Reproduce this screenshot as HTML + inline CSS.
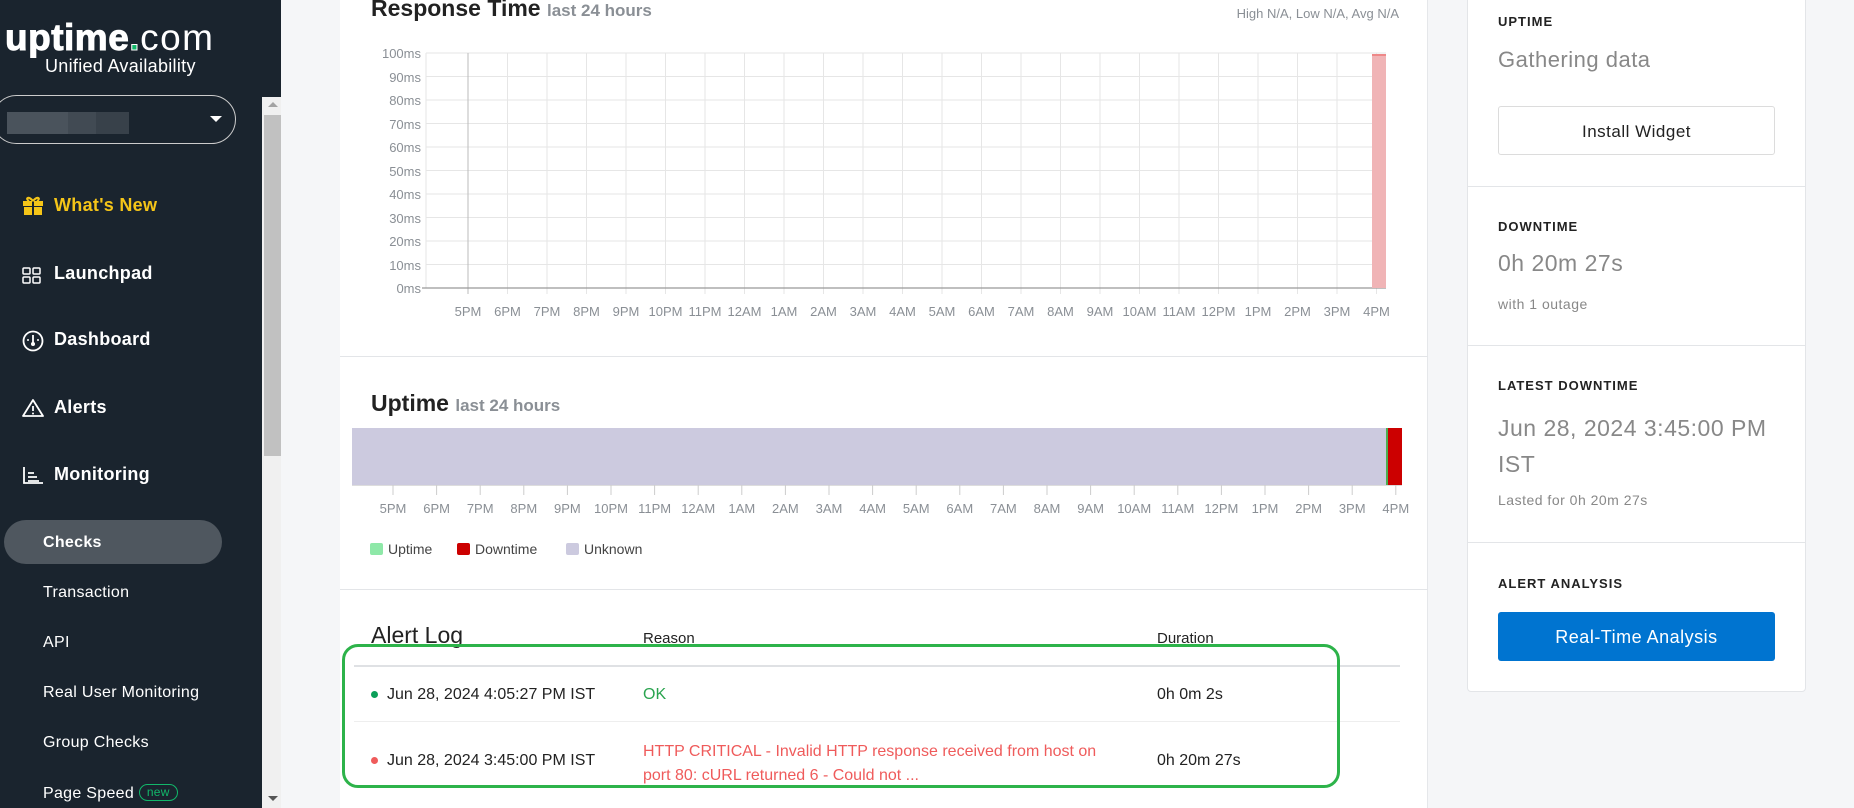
<!DOCTYPE html>
<html><head><meta charset="utf-8"><style>
*{margin:0;padding:0;box-sizing:border-box}
body{width:1854px;height:808px;overflow:hidden;background:#f5f6f8;font-family:"Liberation Sans",sans-serif;position:relative}
.a{position:absolute;white-space:nowrap}
#sb{position:absolute;left:0;top:0;width:281px;height:808px;background:#1a242e}
.nav{position:absolute;left:54px;color:#fff;font-size:18px;font-weight:bold;letter-spacing:.3px}
.sub{position:absolute;left:43px;color:#fff;font-size:16px;letter-spacing:.3px}
.ic{position:absolute;left:22px}
.n{font-family:"Liberation Sans Narrow","Liberation Sans",sans-serif}
.rc{color:#222;font-size:13px;font-weight:bold;letter-spacing:1px;left:1498px}
.rv{color:#888;font-size:23px;left:1498px;letter-spacing:.5px}
.rs{color:#888;font-size:14px;left:1498px;letter-spacing:.5px}
</style></head><body>
<div id="sb">
 <div class="a" style="left:5px;top:18px;color:#fff;font-size:37px;line-height:40px;font-weight:900;letter-spacing:0.5px;-webkit-text-stroke:1px #fff">uptime<span style="color:#12b76a">.</span><span style="font-weight:normal;-webkit-text-stroke:0;letter-spacing:1.5px">com</span></div>
 <div class="a" style="left:45px;top:56px;color:#fff;font-size:18px;letter-spacing:.3px">Unified Availability</div>
 <div class="a" style="left:-8px;top:95px;width:244px;height:49px;border:1px solid #ccc;border-radius:25px"></div>
 <div class="a" style="left:7px;top:112px;width:61px;height:22px;background:#4a535c"></div>
 <div class="a" style="left:68px;top:112px;width:28px;height:22px;background:#414a53"></div>
 <div class="a" style="left:96px;top:112px;width:33px;height:22px;background:#38414a"></div>
 <div class="a" style="left:210px;top:116px;width:0;height:0;border-left:6px solid transparent;border-right:6px solid transparent;border-top:6px solid #fff"></div>
 <div class="a" style="left:262px;top:97px;width:19px;height:711px;background:#f0f0f0"></div>
 <div class="a" style="left:264px;top:115px;width:17px;height:341px;background:#c1c1c1"></div>
 <div class="a" style="left:268px;top:102px;border-left:5px solid transparent;border-right:5px solid transparent;border-bottom:5px solid #a3a3a3"></div>
 <div class="a" style="left:268px;top:796px;border-left:5px solid transparent;border-right:5px solid transparent;border-top:5px solid #555"></div>
 <svg class="ic" style="top:195px" width="22" height="20" viewBox="0 0 22 20"><rect x="1" y="6" width="20" height="5" fill="#f5c518"/><rect x="2" y="12" width="18" height="8" fill="#f5c518"/><rect x="10" y="6" width="2" height="14" fill="#1a242e"/><path d="M11 6 C6 0 3 4 7 6 M11 6 C16 0 19 4 15 6" stroke="#f5c518" stroke-width="2" fill="none"/></svg>
 <div class="nav" style="top:195px;color:#f5c518">What's New</div>
 <svg class="ic" style="top:266px" width="20" height="20"><g fill="none" stroke="#fff" stroke-width="1.5"><rect x="1" y="2" width="7" height="6" rx="1"/><rect x="11" y="2" width="7" height="6" rx="1"/><rect x="1" y="11" width="7" height="6" rx="1"/><rect x="11" y="11" width="7" height="6" rx="1"/></g></svg>
 <div class="nav" style="top:263px">Launchpad</div>
 <svg class="ic" style="top:330px" width="22" height="22"><circle cx="11" cy="11" r="9.5" fill="none" stroke="#fff" stroke-width="1.8"/><path d="M11 5v8" stroke="#fff" stroke-width="1.8"/><circle cx="11" cy="14" r="2" fill="#fff"/><circle cx="6" cy="10" r="1" fill="#fff"/><circle cx="16" cy="10" r="1" fill="#fff"/></svg>
 <div class="nav" style="top:329px">Dashboard</div>
 <svg class="ic" style="top:398px" width="22" height="20"><path d="M11 2 L21 18 H1 Z" fill="none" stroke="#fff" stroke-width="1.8" stroke-linejoin="round"/><path d="M11 8v5" stroke="#fff" stroke-width="1.8"/><circle cx="11" cy="15.5" r="1" fill="#fff"/></svg>
 <div class="nav" style="top:397px">Alerts</div>
 <svg class="ic" style="top:465px" width="22" height="20"><path d="M2 2v16h19M6 8h6M6 12h9M6 16h11" stroke="#fff" stroke-width="1.8" fill="none"/></svg>
 <div class="nav" style="top:464px">Monitoring</div>
 <div class="a" style="left:4px;top:520px;width:218px;height:44px;border-radius:22px;background:#4f575f"></div>
 <div class="sub" style="top:534px;font-weight:bold">Checks</div>
 <div class="sub" style="top:584px">Transaction</div>
 <div class="sub" style="top:634px">API</div>
 <div class="sub" style="top:684px">Real User Monitoring</div>
 <div class="sub" style="top:734px">Group Checks</div>
 <div class="sub" style="top:784px">Page Speed <span style="display:inline-block;border:1px solid #12b76a;color:#12b76a;border-radius:10px;font-size:12px;padding:0 7px;line-height:15px;vertical-align:2px">new</span></div>
</div>

<div class="a" style="left:340px;top:0;width:1088px;height:808px;background:#fff;border-right:1px solid #e5e7ea"></div>
<div class="a" style="left:340px;top:356px;width:1088px;height:1px;background:#e3e5e8"></div>
<div class="a" style="left:340px;top:589px;width:1088px;height:1px;background:#e3e5e8"></div>

<div class="a n" style="left:371px;top:-5px;font-size:23px;font-weight:bold;color:#222">Response Time <span style="font-size:17px;color:#8a8f95">last 24 hours</span></div>
<div class="a n" style="right:455px;top:6px;font-size:13px;color:#8a8f95">High N/A, Low N/A, Avg N/A</div>

<svg class="a" style="left:0;top:0" width="1854" height="808" font-family="Liberation Sans Narrow, Liberation Sans, sans-serif" font-size="13" fill="#8a8f95">
<g stroke="#e6e6e6" stroke-width="1">
<path d="M426 53H1386M426 76.5H1386M426 100H1386M426 123.5H1386M426 147H1386M426 170.5H1386M426 194H1386M426 217.5H1386M426 241H1386M426 264.5H1386"/>
<path d="M507.5 53V294M547 53V294M586.5 53V294M626 53V294M665.5 53V294M705 53V294M744.5 53V294M784 53V294M823.5 53V294M863 53V294M902.5 53V294M942 53V294M981.5 53V294M1021 53V294M1060.5 53V294M1100 53V294M1139.5 53V294M1179 53V294M1218.5 53V294M1258 53V294M1297.5 53V294M1337 53V294M1376.5 53V294M426 53V288"/>
</g>
<path d="M468 53V294" stroke="#bbb"/>
<path d="M422 288H1386" stroke="#999" stroke-width="1.2"/>
<rect x="1372" y="54" width="14" height="234" fill="#f0b4b6"/>
<rect x="1372" y="54" width="14" height="2" fill="#e88"/>
<g text-anchor="end">
<text x="421" y="58">100ms</text><text x="421" y="82">90ms</text><text x="421" y="105">80ms</text><text x="421" y="129">70ms</text><text x="421" y="152">60ms</text><text x="421" y="176">50ms</text><text x="421" y="199">40ms</text><text x="421" y="223">30ms</text><text x="421" y="246">20ms</text><text x="421" y="270">10ms</text><text x="421" y="293">0ms</text>
</g>
<g text-anchor="middle">
<text x="468" y="316">5PM</text><text x="507.5" y="316">6PM</text><text x="547" y="316">7PM</text><text x="586.5" y="316">8PM</text><text x="626" y="316">9PM</text><text x="665.5" y="316">10PM</text><text x="705" y="316">11PM</text><text x="744.5" y="316">12AM</text><text x="784" y="316">1AM</text><text x="823.5" y="316">2AM</text><text x="863" y="316">3AM</text><text x="902.5" y="316">4AM</text><text x="942" y="316">5AM</text><text x="981.5" y="316">6AM</text><text x="1021" y="316">7AM</text><text x="1060.5" y="316">8AM</text><text x="1100" y="316">9AM</text><text x="1139.5" y="316">10AM</text><text x="1179" y="316">11AM</text><text x="1218.5" y="316">12PM</text><text x="1258" y="316">1PM</text><text x="1297.5" y="316">2PM</text><text x="1337" y="316">3PM</text><text x="1376.5" y="316">4PM</text>
</g>
<rect x="352" y="428" width="1035" height="57" fill="#cccadf"/>
<rect x="1386" y="428" width="2" height="57" fill="#4caf50"/>
<rect x="1388" y="428" width="14" height="57" fill="#cc0000"/>
<path d="M352 485.5H1402" stroke="#ddd"/>
<g stroke="#ccc"><path d="M393 485V495M436.6 485V495M480.2 485V495M523.8 485V495M567.4 485V495M611 485V495M654.6 485V495M698.2 485V495M741.8 485V495M785.4 485V495M829 485V495M872.6 485V495M916.2 485V495M959.8 485V495M1003.4 485V495M1047 485V495M1090.6 485V495M1134.2 485V495M1177.8 485V495M1221.4 485V495M1265 485V495M1308.6 485V495M1352.2 485V495M1395.8 485V495"/></g>
<g text-anchor="middle">
<text x="393" y="513">5PM</text><text x="436.6" y="513">6PM</text><text x="480.2" y="513">7PM</text><text x="523.8" y="513">8PM</text><text x="567.4" y="513">9PM</text><text x="611" y="513">10PM</text><text x="654.6" y="513">11PM</text><text x="698.2" y="513">12AM</text><text x="741.8" y="513">1AM</text><text x="785.4" y="513">2AM</text><text x="829" y="513">3AM</text><text x="872.6" y="513">4AM</text><text x="916.2" y="513">5AM</text><text x="959.8" y="513">6AM</text><text x="1003.4" y="513">7AM</text><text x="1047" y="513">8AM</text><text x="1090.6" y="513">9AM</text><text x="1134.2" y="513">10AM</text><text x="1177.8" y="513">11AM</text><text x="1221.4" y="513">12PM</text><text x="1265" y="513">1PM</text><text x="1308.6" y="513">2PM</text><text x="1352.2" y="513">3PM</text><text x="1395.8" y="513">4PM</text>
</g>
<rect x="370" y="543" width="13" height="12" rx="2" fill="#8ee8a8"/><text x="388" y="554" fill="#444" font-size="14">Uptime</text>
<rect x="457" y="543" width="13" height="12" rx="2" fill="#cc0000"/><text x="475" y="554" fill="#444" font-size="14">Downtime</text>
<rect x="566" y="543" width="13" height="12" rx="2" fill="#cccadf"/><text x="584" y="554" fill="#444" font-size="14">Unknown</text>
</svg>

<div class="a n" style="left:371px;top:390px;font-size:23px;font-weight:bold;color:#222">Uptime <span style="font-size:17px;color:#8a8f95">last 24 hours</span></div>

<div class="a n" style="left:371px;top:622px;font-size:23px;color:#222">Alert Log</div>
<div class="a n" style="left:643px;top:630px;font-size:15px;color:#222">Reason</div>
<div class="a n" style="left:1157px;top:630px;font-size:15px;color:#222">Duration</div>
<div class="a" style="left:354px;top:665px;width:1046px;height:2px;background:#dfe1e4"></div>
<div class="a" style="left:354px;top:721px;width:1046px;height:1px;background:#eee"></div>
<div class="a" style="left:371px;top:691px;width:7px;height:7px;border-radius:50%;background:#0a9f58"></div>
<div class="a n" style="left:387px;top:686px;font-size:16px;color:#222">Jun 28, 2024 4:05:27 PM IST</div>
<div class="a n" style="left:643px;top:686px;font-size:16px;color:#2aa44f">OK</div>
<div class="a n" style="left:1157px;top:686px;font-size:16px;color:#222">0h 0m 2s</div>
<div class="a" style="left:371px;top:757px;width:7px;height:7px;border-radius:50%;background:#ef5b5b"></div>
<div class="a n" style="left:387px;top:752px;font-size:16px;color:#222">Jun 28, 2024 3:45:00 PM IST</div>
<div class="a n" style="left:643px;top:740px;font-size:16px;color:#ef5b5b;line-height:24px">HTTP CRITICAL - Invalid HTTP response received from host on<br>port 80: cURL returned 6 - Could not ...</div>
<div class="a n" style="left:1157px;top:752px;font-size:16px;color:#222">0h 20m 27s</div>
<div class="a" style="left:342px;top:644px;width:998px;height:144px;border:3.5px solid #2db34a;border-radius:16px"></div>

<div class="a" style="left:1467px;top:-5px;width:339px;height:697px;background:#fff;border:1px solid #e3e5e8;border-radius:4px"></div>
<div class="a" style="left:1467px;top:186px;width:339px;height:1px;background:#e3e5e8"></div>
<div class="a" style="left:1467px;top:345px;width:339px;height:1px;background:#e3e5e8"></div>
<div class="a" style="left:1467px;top:542px;width:339px;height:1px;background:#e3e5e8"></div>
<div class="a rc" style="top:14px">UPTIME</div>
<div class="a rv" style="top:47px;font-size:22px">Gathering data</div>
<div class="a" style="left:1498px;top:106px;width:277px;height:49px;border:1px solid #dcdcdc;border-radius:3px;text-align:center;line-height:49px;font-size:17px;color:#222;letter-spacing:.5px">Install Widget</div>
<div class="a rc" style="top:219px">DOWNTIME</div>
<div class="a rv" style="top:250px">0h 20m 27s</div>
<div class="a rs" style="top:296px">with 1 outage</div>
<div class="a rc" style="top:378px">LATEST DOWNTIME</div>
<div class="a rv" style="top:410px;line-height:36px">Jun 28, 2024 3:45:00 PM<br>IST</div>
<div class="a rs" style="top:492px">Lasted for 0h 20m 27s</div>
<div class="a rc" style="top:576px">ALERT ANALYSIS</div>
<div class="a" style="left:1498px;top:612px;width:277px;height:49px;background:#0074d0;border-radius:3px;text-align:center;line-height:50px;font-size:18px;color:#fff;letter-spacing:.5px">Real-Time Analysis</div>
</body></html>
